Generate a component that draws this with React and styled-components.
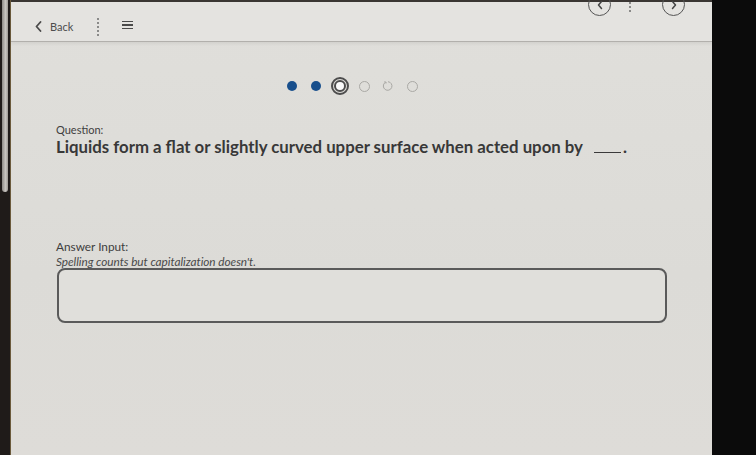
import React from "react";
import styled, { createGlobalStyle } from "styled-components";

const Global = createGlobalStyle`
  html, body { margin: 0; padding: 0; background: #0b0b0b; }
  body { font-family: Lato, "Open Sans", sans-serif; overflow: hidden; }
`;

const Frame = styled.div`
  display: flex;
  width: 756px;
  height: 455px;
  background: #0b0b0b;
`;

const LeftBezel = styled.div`
  width: 11px;
  flex: none;
  background: #1f1b19;
  display: flex;
  flex-direction: column;
  align-items: flex-start;
  border-right: 1px solid #6b5a3c;
  box-sizing: border-box;
`;

const Thumb = styled.div`
  width: 6px;
  height: 192px;
  margin-left: 2px;
  background: linear-gradient(90deg, #8d8a86, #c9c6c1 60%, #9c9894);
  border-radius: 0 0 4px 4px;
`;

const Screen = styled.div`
  width: 701px;
  flex: none;
  display: flex;
  flex-direction: column;
  background: linear-gradient(180deg, #e0dfdb 0%, #dcdbd7 60%, #dedcd8 100%);
  border-top: 2px solid #3a3633;
  box-sizing: border-box;
`;

const RightBezel = styled.div`
  flex: 1;
  background: #0b0b0b;
`;

const TopBar = styled.div`
  height: 40px;
  flex: none;
  display: flex;
  align-items: center;
  padding: 0 0 0 24px;
  background: #e4e3e0;
  border-bottom: 1px solid #b2b0ac;
  box-shadow: 0 2px 3px rgba(0, 0, 0, 0.06);
  box-sizing: border-box;
  color: #4a4a4a;
`;

const BackButton = styled.div`
  display: flex;
  align-items: center;
  gap: 8px;
  font-size: 11px;
  color: #4d4d4d;
  margin-top: 10px;
`;

const VDots = styled.div`
  display: flex;
  flex-direction: column;
  gap: 2px;
  margin-left: ${(p) => p.$ml}px;
  margin-top: ${(p) => p.$mt}px;
  span {
    width: 2px;
    height: 2px;
    border-radius: 1px;
    background: #6d6d6d;
  }
`;

const Hamburger = styled.div`
  display: flex;
  flex-direction: column;
  gap: 2px;
  margin-left: 23px;
  margin-top: 7px;
  span {
    width: 11px;
    height: 1.5px;
    background: #4a4a4a;
  }
`;

const Spacer = styled.div`
  flex: 1;
`;

const RightGroup = styled.div`
  display: flex;
  align-items: flex-start;
  align-self: flex-start;
  margin-top: -9px;
  margin-right: 27px;
`;

const CircleBtn = styled.div`
  width: 23px;
  height: 23px;
  margin-left: ${(p) => p.$ml || 0}px;
  border: 1.5px solid #555;
  border-radius: 50%;
  box-sizing: border-box;
  display: flex;
  align-items: center;
  justify-content: center;
  color: #444;
`;

const Content = styled.div`
  display: flex;
  flex-direction: column;
  padding: 0 44px 0 45px;
  color: #3b3b3b;
`;

const Progress = styled.div`
  display: flex;
  align-items: center;
  justify-content: center;
  margin: 34px 0 0 -20px;
  height: 20px;
`;

const Step = styled.div`
  width: 24px;
  height: 20px;
  display: flex;
  align-items: center;
  justify-content: center;
`;

const Filled = styled.div`
  width: 10px;
  height: 10px;
  border-radius: 50%;
  background: #184f8c;
`;

const Current = styled.div`
  width: 18px;
  height: 18px;
  border-radius: 50%;
  border: 2px solid #4d4d4d;
  box-sizing: border-box;
  display: flex;
  align-items: center;
  justify-content: center;
  &::after {
    content: "";
    width: 8px;
    height: 8px;
    border-radius: 50%;
    border: 2px solid #4d4d4d;
    background: #fafafa;
  }
`;

const Empty = styled.div`
  width: 9px;
  height: 9px;
  border-radius: 50%;
  border: 1px solid #aaa9a5;
`;

const Label = styled.div`
  font-size: ${(p) => p.$size}px;
  line-height: 14px;
  color: #3e3e3e;
  margin-top: ${(p) => p.$mt}px;
`;

const QuestionText = styled.div`
  font-size: 16.8px;
  line-height: 20px;
  font-weight: 700;
  color: #383838;
  margin-top: 0;
  white-space: nowrap;
`;

const Blank = styled.span`
  display: inline-block;
  width: 27px;
  border-bottom: 1.5px solid #3a3a3a;
  margin-left: 11px;
  margin-right: 2px;
`;

const Hint = styled.div`
  font-size: 11.8px;
  line-height: 15px;
  font-style: italic;
  color: #4a4a4a;
  letter-spacing: -0.05px;
`;

const AnswerBox = styled.div`
  width: 610px;
  height: 55px;
  margin: -1px 0 0 1px;
  border: 2px solid #5a5a5a;
  border-radius: 8px;
  box-sizing: border-box;
  background: #e0dfdb;
`;

export default function App() {
  return (
    <>
      <Global />
      <Frame>
        <LeftBezel>
          <Thumb />
        </LeftBezel>
        <Screen>
          <TopBar>
            <BackButton>
              <svg width="7" height="11" viewBox="0 0 7 11">
                <path d="M5.5 1 L1.5 5.5 L5.5 10" fill="none" stroke="#4a4a4a" strokeWidth="1.8" strokeLinecap="round" strokeLinejoin="round" />
              </svg>
              Back
            </BackButton>
            <VDots $ml={24} $mt={10}>
              <span /><span /><span /><span /><span />
            </VDots>
            <Hamburger>
              <span /><span /><span />
            </Hamburger>
            <Spacer />
            <RightGroup>
              <CircleBtn>
                <svg width="8" height="10" viewBox="0 0 8 10">
                  <path d="M5.5 1.5 L2.5 5 L5.5 8.5" fill="none" stroke="#444" strokeWidth="1.5" strokeLinecap="round" strokeLinejoin="round" />
                </svg>
              </CircleBtn>
              <VDots $ml={18} $mt={9}>
                <span /><span /><span />
              </VDots>
              <CircleBtn $ml={31}>
                <svg width="8" height="10" viewBox="0 0 8 10">
                  <path d="M2.5 1.5 L5.5 5 L2.5 8.5" fill="none" stroke="#444" strokeWidth="1.5" strokeLinecap="round" strokeLinejoin="round" />
                </svg>
              </CircleBtn>
            </RightGroup>
          </TopBar>
          <Content>
            <Progress>
              <Step><Filled /></Step>
              <Step><Filled /></Step>
              <Step><Current /></Step>
              <Step><Empty /></Step>
              <Step>
                <svg width="12" height="12" viewBox="0 0 12 12">
                  <path d="M3 2.6 A4.3 4.3 0 1 0 6 1.7" fill="none" stroke="#a9a8a4" strokeWidth="1" />
                  <path d="M3 1 L3 2.8 L4.8 2.8" fill="none" stroke="#a9a8a4" strokeWidth="1" />
                </svg>
              </Step>
              <Step><Empty /></Step>
            </Progress>
            <Label $size={11} $mt={27}>Question:</Label>
            <QuestionText>
              Liquids form a flat or slightly curved upper surface when acted upon by<Blank />.
            </QuestionText>
            <Label $size={11.8} $mt={83}>Answer Input:</Label>
            <Hint>Spelling counts but capitalization doesn't.</Hint>
            <AnswerBox />
          </Content>
        </Screen>
        <RightBezel />
      </Frame>
    </>
  );
}
